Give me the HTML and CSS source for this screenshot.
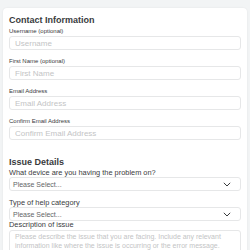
FILE: index.html
```html
<!DOCTYPE html>
<html lang="en">
<head>
    <meta charset="UTF-8">
    <meta name="viewport" content="width=device-width, initial-scale=1.0">
    <title>Support Form</title>
    <link rel="stylesheet" href="styles.css">
</head>
<body>
    <form class="card">
        <h2>Contact Information</h2>

        <label class="small-label" for="username">Username (optional)</label>
        <input type="text" id="username" placeholder="Username">

        <label class="small-label" for="first-name">First Name (optional)</label>
        <input type="text" id="first-name" placeholder="First Name">

        <label class="small-label" for="email">Email Address</label>
        <input type="email" id="email" placeholder="Email Address">

        <label class="small-label" for="confirm-email">Confirm Email Address</label>
        <input type="email" id="confirm-email" placeholder="Confirm Email Address">

        <h2 class="section-title">Issue Details</h2>

        <label class="field-label" for="device">What device are you having the problem on?</label>
        <div class="select">
            <span>Please Select...</span>
            <svg width="8" height="5" viewBox="0 0 8 5"><path d="M0.8 0.8 L4 4 L7.2 0.8" fill="none" stroke="#393b3d" stroke-width="1"/></svg>
        </div>

        <label class="field-label" for="category">Type of help category</label>
        <div class="select last">
            <span>Please Select...</span>
            <svg width="8" height="5" viewBox="0 0 8 5"><path d="M0.8 0.8 L4 4 L7.2 0.8" fill="none" stroke="#393b3d" stroke-width="1"/></svg>
        </div>

        <label class="field-label" for="description">Description of issue</label>
        <textarea id="description" placeholder="Please describe the issue that you are facing. Include any relevant information like where the issue is occurring or the error message."></textarea>
    </form>
</body>
</html>
```

FILE: styles.css
```css
body {
    margin: 0;
    padding: 8px 3px 0;
    background-color: #f2f4f5;
    font-family: "Liberation Sans", Arial, sans-serif;
    color: #393b3d;
}

.card {
    background: white;
    border-radius: 4px;
    padding: 5px 6px 20px;
    box-shadow: 0 0 2px rgba(0,0,0,0.08);
    display: flex;
    flex-direction: column;
}

h2 {
    font-size: 9px;
    line-height: 14px;
    margin: 0;
    color: #393b3d;
}

.section-title {
    margin-top: 8px;
}

.small-label {
    font-size: 6px;
    line-height: 8px;
    margin-bottom: 1px;
    color: #393b3d;
}

input {
    height: 14px;
    border: 1px solid #e6e7e8;
    border-radius: 3px;
    padding: 0 5px;
    margin: 0 0 7px;
    box-sizing: border-box;
    font-family: inherit;
    font-size: 8px;
    outline: none;
}

input::placeholder,
textarea::placeholder {
    color: #c3c4c5;
}

.field-label {
    font-size: 7.4px;
    line-height: 8px;
    color: #393b3d;
    font-weight: 500;
}

.select {
    height: 14px;
    border: 1px solid #e6e7e8;
    border-radius: 3px;
    padding: 0 9px 0 3px;
    margin-bottom: 8px;
    box-sizing: border-box;
    display: flex;
    align-items: center;
    justify-content: space-between;
    font-size: 7px;
    color: #636567;
}

.select.last {
    margin-bottom: 0;
}

textarea {
    height: 40px;
    margin-top: 1px;
    border: 1px solid #e6e7e8;
    border-radius: 3px;
    padding: 1px 5px;
    box-sizing: border-box;
    resize: none;
    font-family: inherit;
    font-size: 7px;
    line-height: 9px;
    outline: none;
}
```
